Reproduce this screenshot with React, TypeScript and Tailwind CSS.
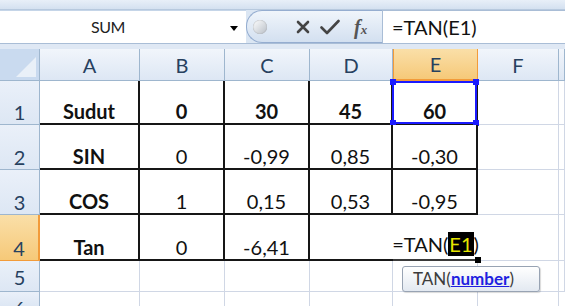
import React from 'react';

type Row = {
  n: string;
  cells: string[];
  bold: boolean[];
};

const rows: Row[] = [
  { n: '1', cells: ['Sudut', '0', '30', '45', '60'], bold: [true, true, true, true, true] },
  { n: '2', cells: ['SIN', '0', '-0,99', '0,85', '-0,30'], bold: [true, false, false, false, false] },
  { n: '3', cells: ['COS', '1', '0,15', '0,53', '-0,95'], bold: [true, false, false, false, false] },
];

const cols = ['A', 'B', 'C', 'D', 'E', 'F', ''];

const headCell =
  'flex items-center justify-center border-r border-b border-[#9eb6ce] bg-gradient-to-b from-[#f1f5fb] to-[#dde7f4] text-[20px] text-[#27415f]';
const rowHead =
  'flex items-end justify-center border-r border-b border-[#9eb6ce] bg-gradient-to-b from-[#eaf0f9] to-[#dde7f4] text-[20px] leading-[24px] text-[#27415f]';
const grid = 'border-r border-b border-[#d0d7e5] bg-white';
const dataCell = 'flex items-end justify-center text-[20px] leading-[24px] text-[#111] bg-white whitespace-nowrap';

function FormulaBar() {
  return (
    <div className="flex h-[34px] shrink-0 border-b border-[#a9bdd6] bg-[#dbe6f3]">
      <div className="relative flex w-[246px] items-center justify-center border-t border-[#c5d5e8] bg-white pr-[30px]">
        <span className="text-[16px] tracking-tight text-[#222]">SUM</span>
        <span className="absolute right-[8px] top-[15px] h-0 w-0 border-x-[4px] border-t-[5px] border-x-transparent border-t-black" />
      </div>
      <div className="flex w-[136px] items-center rounded-l-[16px] border border-r-0 border-[#95add0] bg-gradient-to-b from-[#f0f5fb] to-[#d3e0f0] pl-[6px]">
        <span className="h-[14px] w-[14px] rounded-full bg-gradient-to-br from-white to-[#b9bfc7] shadow-[inset_0_0_1px_#888]" />
        <svg className="ml-[29px]" width="14" height="14" viewBox="0 0 14 14">
          <path d="M2 2 L12 12 M12 2 L2 12" stroke="#444" strokeWidth="2.6" strokeLinecap="round" />
        </svg>
        <svg className="ml-[10px]" width="20" height="16" viewBox="0 0 20 16">
          <path d="M1.5 8.5 L7 14 L18.5 2" fill="none" stroke="#444" strokeWidth="2.6" strokeLinecap="round" strokeLinejoin="round" />
        </svg>
        <span className="ml-[14px] font-['Liberation_Serif',serif] text-[20px] font-bold italic leading-none text-[#555]">
          f<span className="text-[13px]">x</span>
        </span>
      </div>
      <div className="flex flex-1 items-center border-l border-t border-[#a9bdd6] bg-white pl-[9px]">
        <span className="text-[20px] text-[#111]">=TAN(E1)</span>
      </div>
    </div>
  );
}

export default function App() {
  return (
    <div className="flex h-[306px] w-[565px] flex-col overflow-hidden bg-white font-['Lato','Open_Sans',sans-serif]">
      <div className="h-[10px] shrink-0 border-b border-[#b7c9de] bg-gradient-to-b from-[#e8eff8] to-[#d4e1f0]" />
      <FormulaBar />
      <div className="h-[5px] shrink-0 bg-[#dfe8f4]" />
      <div className="grid min-h-0 flex-1 grid-cols-[40px_100px_85px_85px_83px_85px_81px_1fr] grid-rows-[32px_44px_45px_45px_46px_31px_minmax(0,1fr)] overflow-hidden">
        {/* header row */}
        <div className="relative border-r border-b border-[#9eb6ce] bg-[#c9daef]">
          <span className="absolute bottom-[3px] right-[3px] h-0 w-0 border-b-[20px] border-l-[20px] border-b-[#e9f0f8] border-l-transparent" />
        </div>
        {cols.map((c) =>
          c === 'E' ? (
            <div
              key={c}
              className="flex items-center justify-center border-x border-b-2 border-[#f29b3a] bg-gradient-to-b from-[#fadfa8] to-[#f6c978] text-[20px] text-[#27415f]"
            >
              {c}
            </div>
          ) : (
            <div key={c || 'g'} className={headCell}>
              {c}
            </div>
          )
        )}

        {/* rows 1-3 */}
        {rows.map((r, ri) => (
          <React.Fragment key={r.n}>
            <div className={rowHead}>{r.n}</div>
            {r.cells.map((v, ci) => {
              const sel = ri === 0 && ci === 4;
              return (
                <div
                  key={ci}
                  className={`${dataCell} relative border-r-2 border-b-2 border-[#161616] ${r.bold[ci] ? 'font-bold' : ''}`}
                >
                  {v}
                  {sel && (
                    <span className="pointer-events-none absolute left-[-1px] top-0 bottom-[-1px] right-[-1px] border-2 border-[#1a1aff]">
                      <span className="absolute left-[-4px] top-[-4px] h-[6px] w-[6px] bg-[#1a1aff]" />
                      <span className="absolute right-[-4px] top-[-4px] h-[6px] w-[6px] bg-[#1a1aff]" />
                      <span className="absolute left-[-4px] bottom-[-4px] h-[6px] w-[6px] bg-[#1a1aff]" />
                      <span className="absolute right-[-4px] bottom-[-4px] h-[6px] w-[6px] bg-[#1a1aff]" />
                    </span>
                  )}
                </div>
              );
            })}
            <div className={grid} />
            <div className={grid} />
          </React.Fragment>
        ))}

        {/* row 4 */}
        <div className="flex items-end justify-center border-r-2 border-b border-[#f29b3a] bg-gradient-to-b from-[#fadfa8] to-[#f6c978] text-[20px] leading-[24px] text-[#27415f]">
          4
        </div>
        <div className={`${dataCell} border-r-2 border-b-2 border-[#161616] font-bold`}>Tan</div>
        <div className={`${dataCell} border-r-2 border-b-2 border-[#161616]`}>0</div>
        <div className={`${dataCell} border-r-2 border-b-2 border-[#161616]`}>-6,41</div>
        <div className={`${dataCell} border-b-2 border-[#161616]`} />
        <div className="relative z-10 flex items-end justify-center border-b-2 border-[#3a3a3a] bg-white pb-[3px] text-[20px] leading-[24px] whitespace-nowrap text-[#111]">
          <span>
            =TAN(<span className="bg-black px-[1px] text-[#e6e600]">E1</span>)
          </span>
          <span className="absolute bottom-[-4px] right-[-3px] h-[6px] w-[6px] bg-black" />
        </div>
        <div className={grid} />
        <div className={grid} />

        {/* row 5 */}
        <div className={`${rowHead} pb-[2px]`}>5</div>
        <div className={grid} />
        <div className={grid} />
        <div className={grid} />
        <div className={grid} />
        <div className={`${grid} relative`}>
          <div className="absolute left-[9px] top-[5px] z-20 flex h-[26px] w-[138px] items-center rounded-[3px] border border-[#98a3b3] bg-gradient-to-b from-white to-[#e3e9f1] pl-[10px] text-[17px] text-[#3c3c3c] shadow-[1px_1px_1px_rgba(0,0,0,0.15)]">
            TAN(<span className="font-bold text-[#1f1fe0] underline">number</span>)
          </div>
        </div>
        <div className={grid} />
        <div className={grid} />

        {/* row 6, cut off by the window */}
        <div className="flex items-start justify-center overflow-hidden border-r border-[#9eb6ce] bg-gradient-to-b from-[#eaf0f9] to-[#dde7f4] pt-[4px] text-[20px] leading-[24px] text-[#27415f]">
          6
        </div>
        <div className="border-r border-[#d0d7e5]" />
        <div className="border-r border-[#d0d7e5]" />
        <div className="border-r border-[#d0d7e5]" />
        <div className="border-r border-[#d0d7e5]" />
        <div className="border-r border-[#d0d7e5]" />
        <div className="border-r border-[#d0d7e5]" />
        <div />
      </div>
    </div>
  );
}
